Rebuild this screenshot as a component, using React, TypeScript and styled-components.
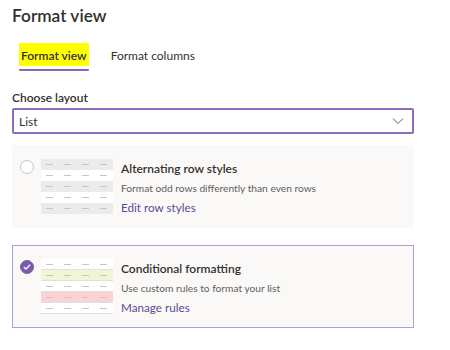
import React from "react";
import styled, { createGlobalStyle } from "styled-components";

const Global = createGlobalStyle`
  html, body { margin: 0; padding: 0; background: #ffffff; }
  body { font-family: "Lato", "Open Sans", sans-serif; color: #323130; }
  * { box-sizing: border-box; }
`;

const Panel = styled.div`
  width: 450px;
  height: 350px;
  padding: 4px 36px 0 12px;
  overflow: hidden;
`;

const Title = styled.h1`
  margin: 0;
  font-size: 17.3px;
  font-weight: 600;
  line-height: 24px;
  color: #323130;
`;

const Tabs = styled.div`
  display: flex;
  gap: 20px;
  margin-top: 15px;
  padding-left: 7px;
`;

const Tab = styled.div<{ $active?: boolean }>`
  position: relative;
  height: 28px;
  display: flex;
  align-items: flex-start;
  font-size: 12px;
  font-weight: ${(p) => (p.$active ? 600 : 400)};
  color: #323130;
  span {
    display: inline-block;
    padding: 4px 2px 2px 2px;
    line-height: 17px;
    background: ${(p) => (p.$active ? "#ffff00" : "transparent")};
  }
  &::after {
    content: "";
    position: absolute;
    left: 0;
    right: 0;
    bottom: 0;
    height: 2px;
    border-radius: 1px;
    background: ${(p) => (p.$active ? "#8764b8" : "transparent")};
  }
`;

const Label = styled.div`
  margin-top: 17px;
  font-size: 12px;
  font-weight: 600;
  line-height: 20px;
  color: #323130;
`;

const Select = styled.div`
  height: 26px;
  border: 2px solid #8a6cbf;
  border-radius: 2px;
  display: flex;
  align-items: center;
  justify-content: space-between;
  padding: 0 8px 0 5px;
  font-size: 12px;
  color: #323130;
`;

const Card = styled.div<{ $selected?: boolean }>`
  margin-top: ${(p) => (p.$selected ? "17px" : "11px")};
  height: 83px;
  background: #faf9f8;
  border: 1px solid ${(p) => (p.$selected ? "#b49ddb" : "#faf9f8")};
  display: flex;
  align-items: flex-start;
  padding: 13px 0 0 7px;
`;

const Radio = styled.div<{ $checked?: boolean }>`
  width: 14px;
  height: 14px;
  border-radius: 50%;
  flex: none;
  margin-top: 1px;
  border: 1px solid ${(p) => (p.$checked ? "#7b5ba8" : "#c8c6c4")};
  background: ${(p) => (p.$checked ? "#7b5ba8" : "#ffffff")};
  display: flex;
  align-items: center;
  justify-content: center;
`;

const Thumb = styled.svg`
  flex: none;
  margin-left: 7px;
`;

const Texts = styled.div`
  margin-left: 8px;
  display: flex;
  flex-direction: column;
`;

const CardTitle = styled.div`
  font-size: 12px;
  font-weight: 600;
  line-height: 18px;
  margin-top: 1px;
  color: #323130;
`;

const Desc = styled.div`
  font-size: 10.2px;
  line-height: 16px;
  margin-top: 2px;
  color: #605e5c;
`;

const Link = styled.a`
  font-size: 11.7px;
  line-height: 18px;
  margin-top: 2px;
  color: #5c4a91;
  text-decoration: none;
`;

type Row = { fill: string; line?: boolean };

const Thumbnail: React.FC<{ rows: Row[] }> = ({ rows }) => (
  <Thumb width="72" height="55" viewBox="0 0 72 55">
    {rows.map((r, i) => (
      <g key={i}>
        <rect x="0" y={i * 11} width="72" height="11" fill={r.fill} />
        {r.line && (
          <rect x="0" y={i * 11 + 10} width="72" height="1" fill="#e1dfdd" />
        )}
        {[5, 23, 41, 59].map((x) => (
          <rect key={x} x={x} y={i * 11 + 5} width="7" height="1" fill="#c8c6c4" />
        ))}
      </g>
    ))}
  </Thumb>
);

export default function App() {
  return (
    <>
      <Global />
      <Panel>
        <Title>Format view</Title>
        <Tabs>
          <Tab $active>
            <span>Format view</span>
          </Tab>
          <Tab>
            <span>Format columns</span>
          </Tab>
        </Tabs>
        <Label>Choose layout</Label>
        <Select>
          <span>List</span>
          <svg width="12" height="8" viewBox="0 0 12 8">
            <path d="M1 1.5 L6 6.5 L11 1.5" fill="none" stroke="#605e5c" strokeWidth="1" />
          </svg>
        </Select>
        <Card>
          <Radio />
          <Thumbnail
            rows={[
              { fill: "#ebebeb" },
              { fill: "#ffffff" },
              { fill: "#ebebeb" },
              { fill: "#ffffff" },
              { fill: "#ebebeb" },
            ]}
          />
          <Texts>
            <CardTitle>Alternating row styles</CardTitle>
            <Desc>Format odd rows differently than even rows</Desc>
            <Link>Edit row styles</Link>
          </Texts>
        </Card>
        <Card $selected>
          <Radio $checked>
            <svg width="8" height="6" viewBox="0 0 8 6">
              <path d="M0.8 3 L3 5 L7.2 0.8" fill="none" stroke="#ffffff" strokeWidth="1.3" />
            </svg>
          </Radio>
          <Thumbnail
            rows={[
              { fill: "#ffffff", line: true },
              { fill: "#f0f5d2", line: true },
              { fill: "#ffffff", line: true },
              { fill: "#fcd2d6", line: true },
              { fill: "#ffffff", line: true },
            ]}
          />
          <Texts>
            <CardTitle>Conditional formatting</CardTitle>
            <Desc>Use custom rules to format your list</Desc>
            <Link>Manage rules</Link>
          </Texts>
        </Card>
      </Panel>
    </>
  );
}
